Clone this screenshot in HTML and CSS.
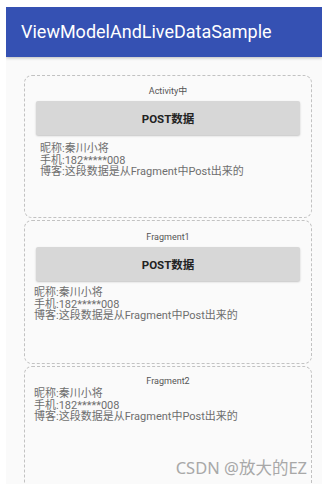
FILE: index.html
```html
<!DOCTYPE html>
<html lang="zh">
<head>
<meta charset="utf-8">
<link rel="stylesheet" href="styles.css">
</head>
<body>
<div class="frame">
  <div class="toolbar">ViewModelAndLiveDataSample</div>
  <div class="content">
    <div class="card card-activity">
      <div class="card-title">Activity中</div>
      <div class="btn">POST数据</div>
      <div class="info info-indent">
        <div>昵称:秦川小将</div>
        <div>手机:182*****008</div>
        <div>博客:这段数据是从Fragment中Post出来的</div>
      </div>
    </div>
    <div class="card card-f1">
      <div class="card-title">Fragment1</div>
      <div class="btn">POST数据</div>
      <div class="info">
        <div>昵称:秦川小将</div>
        <div>手机:182*****008</div>
        <div>博客:这段数据是从Fragment中Post出来的</div>
      </div>
    </div>
    <div class="card card-f2">
      <div class="card-title">Fragment2</div>
      <div class="info info-tight">
        <div>昵称:秦川小将</div>
        <div>手机:182*****008</div>
        <div>博客:这段数据是从Fragment中Post出来的</div>
      </div>
    </div>
  </div>
  <div class="watermark">CSDN @放大的EZ</div>
</div>
</body>
</html>
```

FILE: styles.css
```css
* { box-sizing: border-box; }
html, body {
  margin: 0;
  padding: 0;
  background: #ffffff;
}
body {
  width: 322px;
  height: 489px;
  overflow: hidden;
  font-family: Roboto, "Noto Sans CJK SC", sans-serif;
}
.frame {
  position: relative;
  margin: 7px 0 0 6px;
  width: 316px;
  height: 477px;
  background: #fafafa;
  overflow: hidden;
}
.toolbar {
  position: relative;
  z-index: 1;
  height: 50px;
  background: #3551b3;
  color: #ffffff;
  font-size: 18px;
  line-height: 50px;
  padding-left: 15px;
  box-shadow: 0 1px 3px rgba(0,0,0,0.25);
}
.content {
  display: flex;
  flex-direction: column;
  gap: 2px;
  padding: 18px 10px 0 18px;
}
.card {
  border: 1px dashed #c2c2c2;
  border-radius: 8px;
  display: flex;
  flex-direction: column;
}
.card-activity { height: 143px; padding-top: 9px; }
.card-f1 { height: 144px; padding-top: 10px; }
.card-f2 { height: 160px; padding-top: 8px; }
.card-title {
  text-align: center;
  font-size: 9px;
  line-height: 12px;
  color: #555555;
}
.btn {
  margin: 4px 11px 0 11px;
  height: 34px;
  background: #d7d7d7;
  border-radius: 2px;
  box-shadow: 0 1px 2px rgba(0,0,0,0.22);
  display: flex;
  align-items: center;
  justify-content: center;
  font-size: 11.5px;
  font-weight: 700;
  color: #222222;
}
.info {
  margin: 6px 0 0 9px;
  font-size: 11px;
  line-height: 11.5px;
  color: #6e6e6e;
}
.info-indent { margin: 8px 0 0 15px; }
.info-tight { margin-top: 1px; }
.watermark {
  position: absolute;
  right: 15px;
  bottom: 5px;
  font-size: 16.5px;
  font-family: "Noto Sans", "Noto Sans CJK SC", sans-serif;
  color: #a0a0a0;
  opacity: 0.9;
}
```
